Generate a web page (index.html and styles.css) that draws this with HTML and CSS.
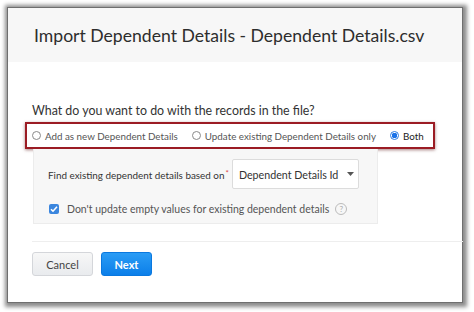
FILE: index.html
```html
<!DOCTYPE html>
<html>
<head>
<meta charset="utf-8">
<link rel="stylesheet" href="styles.css">
</head>
<body>
<div class="frame">
  <div class="dialog">
    <div class="header">Import Dependent Details - Dependent Details.csv</div>
    <div class="content">
      <div class="question">What do you want to do with the records in the file?</div>
      <div class="radios">
        <label class="radio"><span class="dot"></span>Add as new Dependent Details</label>
        <label class="radio"><span class="dot"></span>Update existing Dependent Details only</label>
        <label class="radio sel"><span class="dot on"></span>Both</label>
      </div>
      <div class="panel">
        <div class="row">
          <span class="lbl">Find existing dependent details based on<span class="req">*</span></span>
          <div class="select">Dependent Details Id<svg class="caret" width="7" height="4" viewBox="0 0 7 4"><path d="M0 0h7L3.5 4z" fill="#555"/></svg></div>
        </div>
        <div class="row check">
          <span class="cb"><svg width="10" height="10" viewBox="0 0 10 10"><path d="M2 5.2l2 2 4-4.4" fill="none" stroke="#fff" stroke-width="1.6"/></svg></span>
          <span class="cbl">Don't update empty values for existing dependent details</span>
          <span class="help">?</span>
        </div>
      </div>
      <div class="sep"></div>
      <div class="buttons">
        <button class="btn cancel">Cancel</button>
        <button class="btn next">Next</button>
      </div>
    </div>
  </div>
</div>
</body>
</html>
```
FILE: styles.css
```css
html, body { margin: 0; padding: 0; background: #fff; }
body { font-family: Lato, "Open Sans", sans-serif; color: #333; white-space: nowrap; }
.frame { padding: 7px 11px 9px 7px; width: 474px; height: 312px; box-sizing: border-box; }
.dialog {
  width: 456px; height: 296px; background: #fff;
  border: 1px solid #6f6f6f;
  box-sizing: border-box;
  box-shadow: 1px 1px 4px 3px rgba(0,0,0,0.45);
}
.header {
  background: #f7f7f7; height: 54px; box-sizing: border-box;
  padding: 17px 0 0 26px; font-size: 17.6px; color: #2d2d2d;
}
.content { padding: 0 0 0 24px; }
.question { margin-top: 41px; font-size: 12.4px; line-height: 15px; color: #333; }
.radios {
  margin: 4px 0 0 -7px; width: 410px; height: 27px; box-sizing: border-box;
  border: 2px solid #9b1c24; box-shadow: 0 1px 3px rgba(80,0,0,0.5);
  display: flex; align-items: center; padding-left: 5px; gap: 14px;
  font-size: 9.8px; color: #555;
}
.radio { display: flex; align-items: center; gap: 4px; }
.dot { width: 9px; height: 9px; border: 1px solid #8a8a8a; border-radius: 50%; box-sizing: border-box; background: #fff; }
.dot.on { border: 1px solid #2a7de1; background: radial-gradient(circle, #1a73e8 0 2.6px, #fff 3px); }
.radio.sel { color: #222; }
.panel {
  margin-left: 1px; width: 345px; height: 75px; box-sizing: border-box;
  background: #f7f7f7; border: 1px solid #ececec; border-top: none;
  padding: 10px 0 0 14px;
}
.row { display: flex; align-items: center; }
.lbl { font-size: 9.9px; color: #333; }
.req { color: #e04848; font-size: 8px; vertical-align: 3px; margin-left: 1px; }
.select {
  margin-left: 3px; width: 127px; height: 30px; box-sizing: border-box;
  background: #fff; border: 1px solid #dcdcdc; border-radius: 2px;
  display: flex; align-items: center; padding-left: 6px; font-size: 10.7px; color: #333;
}
.caret { margin-left: 9px; }
.check { margin-top: 14px; }
.cb { width: 10px; height: 10px; background: #3b86de; border-radius: 2px; display: flex; align-items: center; justify-content: center; margin-left: 1px; }
.cbl { margin-left: 8px; font-size: 10.5px; color: #555; }
.help {
  margin-left: 6px; width: 10px; height: 10px; border: 1px solid #bbb; border-radius: 50%;
  font-size: 8px; color: #aaa; display: flex; align-items: center; justify-content: center; line-height: 1;
}
.sep { margin-top: 17px; height: 1px; background: #eeeeee; width: 431px; }
.buttons { display: flex; gap: 8px; margin-top: 10px; }
.btn { font-family: Lato, sans-serif; font-size: 11px; height: 24px; border-radius: 3px; box-sizing: border-box; cursor: pointer; }
.cancel { width: 61px; background: linear-gradient(#f7f7f7, #e9ebee); border: 1px solid #d4d6da; color: #444; }
.next { width: 51px; background: linear-gradient(#2a9cf5, #0c7fe9); border: 1px solid #0a78df; color: #fff; font-weight: bold; }
```
